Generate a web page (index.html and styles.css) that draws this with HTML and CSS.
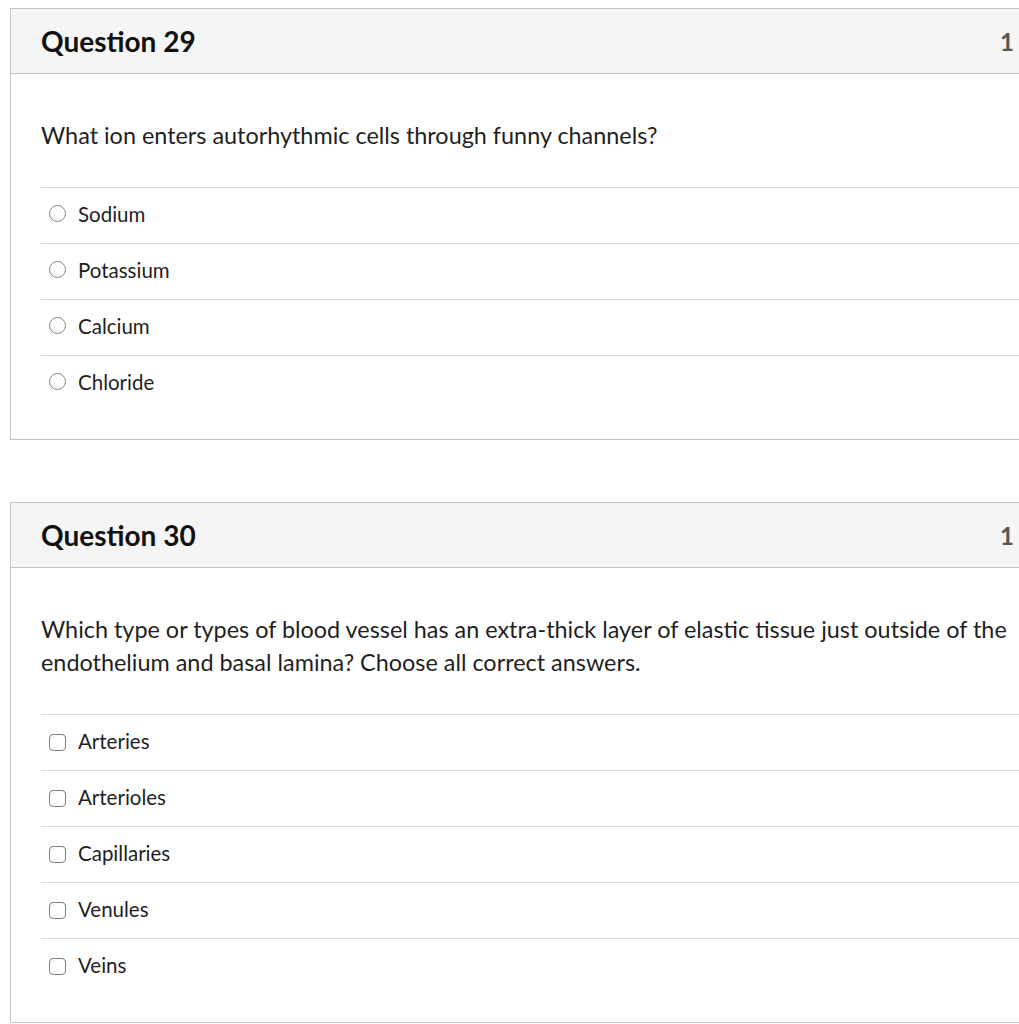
FILE: index.html
```html
<!DOCTYPE html>
<html lang="en">
<head>
<meta charset="utf-8">
<title>Quiz</title>
<link rel="stylesheet" href="styles.css">
</head>
<body>
<div class="page">
  <section class="question">
    <header class="q-header">
      <h2 class="q-title">Question 29</h2>
      <span class="q-points">1</span>
    </header>
    <div class="q-body">
      <p class="q-text">What ion enters autorhythmic cells through funny channels?</p>
      <div class="answers">
        <label class="answer"><span class="radio"></span><span class="answer-label">Sodium</span></label>
        <label class="answer"><span class="radio"></span><span class="answer-label">Potassium</span></label>
        <label class="answer"><span class="radio"></span><span class="answer-label">Calcium</span></label>
        <label class="answer"><span class="radio"></span><span class="answer-label">Chloride</span></label>
      </div>
    </div>
  </section>

  <section class="question">
    <header class="q-header">
      <h2 class="q-title">Question 30</h2>
      <span class="q-points">1</span>
    </header>
    <div class="q-body">
      <p class="q-text">Which type or types of blood vessel has an extra-thick layer of elastic tissue just outside of the endothelium and basal lamina? Choose all correct answers.</p>
      <div class="answers">
        <label class="answer"><span class="checkbox"></span><span class="answer-label">Arteries</span></label>
        <label class="answer"><span class="checkbox"></span><span class="answer-label">Arterioles</span></label>
        <label class="answer"><span class="checkbox"></span><span class="answer-label">Capillaries</span></label>
        <label class="answer"><span class="checkbox"></span><span class="answer-label">Venules</span></label>
        <label class="answer"><span class="checkbox"></span><span class="answer-label">Veins</span></label>
      </div>
    </div>
  </section>
</div>
</body>
</html>
```

FILE: styles.css
```css
html, body {
  margin: 0;
  padding: 0;
  background: #fff;
  overflow: hidden;
}

body {
  font-family: Lato, "Liberation Sans", sans-serif;
  color: #1f1f1f;
}

.page {
  padding: 8px 0 0 10px;
  width: 1020px;
  display: flex;
  flex-direction: column;
  gap: 62px;
}

.question {
  border: 1px solid #c4c4c4;
  border-right: none;
  background: #fff;
}

.q-header {
  height: 64px;
  background: #f5f5f5;
  border-bottom: 1px solid #c4c4c4;
  display: flex;
  align-items: center;
  justify-content: space-between;
  padding: 0 16px 0 30px;
}

.q-title {
  margin: 0;
  font-size: 28px;
  font-weight: 700;
  color: #111;
}

.q-points {
  font-size: 24px;
  font-weight: 700;
  color: #555;
}

.q-body {
  padding: 0 0 28px 30px;
}

.q-text {
  margin: 0;
  padding: 45px 0 35px 0;
  font-size: 23.4px;
  line-height: 33px;
  max-width: 975px;
}

.answers {
  display: flex;
  flex-direction: column;
}

.answer {
  box-sizing: border-box;
  height: 56px;
  border-top: 1px solid #dcdcdc;
  display: flex;
  align-items: center;
  gap: 12px;
  padding-left: 8px;
  padding-bottom: 4px;
  font-size: 20.5px;
}

.radio {
  width: 15px;
  height: 15px;
  border: 1.5px solid #808080;
  border-radius: 50%;
  flex: none;
}

.checkbox {
  width: 15px;
  height: 15px;
  border: 1.5px solid #808080;
  border-radius: 4px;
  flex: none;
  position: relative;
  top: 2px;
}
```
